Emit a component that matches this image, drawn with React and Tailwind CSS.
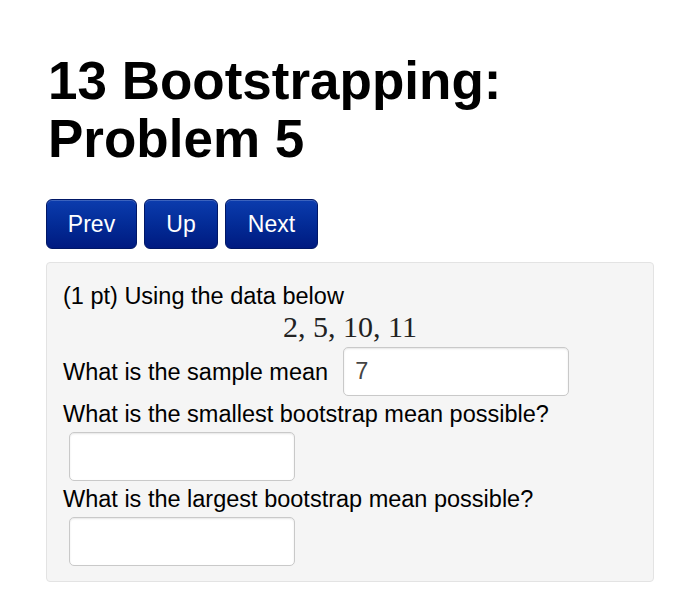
import React from 'react';

const NavButton = ({ label, width }) => (
  <button
    className={`h-[50px] ${width} rounded-[6px] border border-[#001766] bg-gradient-to-b from-[#0c3cae] to-[#001a80] text-white text-[23px] leading-none shadow-[inset_0_1px_0_rgba(255,255,255,0.2)]`}
  >
    {label}
  </button>
);

const AnswerBox = ({ value, className }) => (
  <input
    type="text"
    defaultValue={value}
    className={`h-[49px] w-[226px] rounded-[5px] border border-[#c9c9c9] bg-white px-[11px] text-[23.5px] text-[#444] shadow-[inset_0_1px_2px_rgba(0,0,0,0.1)] outline-none ${className}`}
  />
);

export default function App() {
  return (
    <div className="min-h-[616px] w-[700px] bg-white font-['Liberation_Sans',Arial,sans-serif] text-black">
      <div className="px-[46px] pt-[52px]">
        <h1 className="pl-[2px] text-[53px] font-bold leading-[58px]">
          13 Bootstrapping:
          <br />
          Problem 5
        </h1>

        <div className="mt-[31px] flex gap-[7px]">
          <NavButton label="Prev" width="w-[91px]" />
          <NavButton label="Up" width="w-[74px]" />
          <NavButton label="Next" width="w-[93px]" />
        </div>

        <div className="mt-[13px] w-[608px] rounded-[4px] border border-[#e3e3e3] bg-[#f5f5f5] pb-[15px] pl-[16px] pr-[16px] pt-[19px] text-[23.5px] leading-[28px]">
          <p>(1 pt) Using the data below</p>
          <div className="text-center font-['Liberation_Serif','DejaVu_Serif',serif] text-[30px] leading-[34px] text-[#222]">
            2, 5, 10, 11
          </div>
          <div className="mt-[3px] flex items-center gap-[15px]">
            <span>What is the sample mean</span>
            <AnswerBox value="7" />
          </div>
          <p className="mt-[4px]">What is the smallest bootstrap mean possible?</p>
          <AnswerBox value="" className="ml-[6px] mt-[4px] block" />
          <p className="mt-[4px]">What is the largest bootstrap mean possible?</p>
          <AnswerBox value="" className="ml-[6px] mt-[4px] block" />
        </div>
      </div>
    </div>
  );
}
